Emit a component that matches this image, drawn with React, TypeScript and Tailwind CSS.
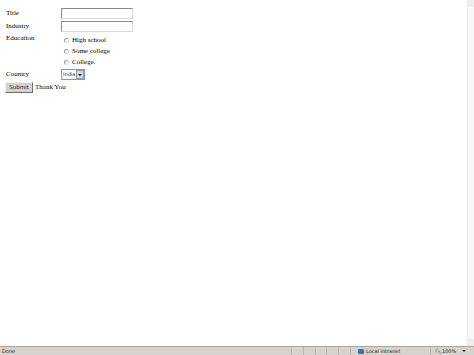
import React from "react";

const serif = { fontFamily: '"Liberation Serif", "Times New Roman", serif' };
const sans = { fontFamily: '"DejaVu Sans", "Liberation Sans", sans-serif' };

function Radio({ label }: { label: string }) {
  return (
    <div className="flex items-center h-[11px]">
      <span className="ml-[3px] w-[5px] h-[5px] rounded-full border border-[#9a9a9a] border-r-[#dcdcdc] border-b-[#dcdcdc] bg-white" />
      <span className="ml-[3px] text-[7px] leading-[7px] text-black" style={serif}>{label}</span>
    </div>
  );
}

export default function App() {
  return (
    <div className="w-[474px] h-[355px] flex flex-col bg-white overflow-hidden">
      <div className="flex flex-1 min-h-0">
        <div className="flex-1 pl-[6px] pt-[8px]">
          <div className="flex items-center h-[11px]">
            <span className="w-[55px] text-[7px] leading-[7px] text-black" style={serif}>Title</span>
            <span className="w-[72px] h-[11px] border border-[#8a8a8a] border-r-[#d8d8d8] border-b-[#d8d8d8] bg-white" />
          </div>
          <div className="flex items-center h-[11px] mt-[2px]">
            <span className="w-[55px] text-[7px] leading-[7px] text-black" style={serif}>Industry</span>
            <span className="w-[72px] h-[11px] border border-[#8a8a8a] border-r-[#d8d8d8] border-b-[#d8d8d8] bg-white" />
          </div>
          <div className="flex mt-[3px]">
            <span className="w-[55px] text-[7px] leading-[7px] text-black" style={serif}>Education</span>
            <div className="flex flex-col">
              <Radio label="High school" />
              <Radio label="Some college" />
              <Radio label="College." />
            </div>
          </div>
          <div className="flex items-center h-[11px] mt-[1px]">
            <span className="w-[55px] text-[7px] leading-[7px] text-black" style={serif}>Country</span>
            <span className="flex items-center h-[11px] border border-[#7f9db9] bg-white">
              <span className="px-[1px] text-[5px] leading-[5px] text-[#222]" style={sans}>India</span>
              <span className="w-[8px] h-[9px] bg-[#d8d8d8] border border-[#9a9a9a] flex items-center justify-center">
                <span className="w-0 h-0 border-l-[2px] border-r-[2px] border-t-[2px] border-l-transparent border-r-transparent border-t-black" />
              </span>
            </span>
          </div>
          <div className="flex items-center mt-[2px] -ml-[1px]">
            <span className="w-[28px] h-[11px] flex items-center justify-center bg-[#d6d3ce] border border-t-[#f0f0f0] border-l-[#f0f0f0] border-r-[#707070] border-b-[#707070] text-[5.5px] leading-[5px] text-[#222]" style={sans}>Submit</span>
            <span className="ml-[2px] text-[7px] leading-[7px] text-black" style={serif}>Thank You</span>
          </div>
        </div>
        <div className="w-[7px] bg-[#f8f8f8] border-l border-[#efefef] flex flex-col">
          <div className="h-[7px] bg-[#eeeeee]" />
          <div className="flex-1" />
          <div className="h-[7px] bg-[#eeeeee]" />
        </div>
      </div>
      <div className="h-[9px] bg-[#d6d3ce] border-t border-[#a8a6a0] flex items-center text-[5px] leading-[5px] text-[#222]" style={sans}>
        <span className="ml-[2px] w-[289px]">Done</span>
        <span className="h-[8px] w-[12px] border-l border-[#b8b5ae]" />
        <span className="h-[8px] w-[12px] border-l border-[#b8b5ae]" />
        <span className="h-[8px] w-[11px] border-l border-[#b8b5ae]" />
        <span className="h-[8px] w-[12px] border-l border-[#b8b5ae]" />
        <span className="h-[8px] w-[12px] border-l border-[#b8b5ae]" />
        <span className="h-[8px] w-[80px] border-l border-[#b8b5ae] flex items-center">
          <span className="ml-[7px] w-[6px] h-[5px] bg-[#3c6fb4] rounded-[1px]" />
          <span className="ml-[2px]">Local intranet</span>
        </span>
        <span className="h-[8px] flex-1 border-l border-[#b8b5ae] flex items-center">
          <span className="ml-[4px] text-[5px]">🔍︎</span>
          <span className="ml-[1px]">100%</span>
          <span className="ml-[6px] w-0 h-0 border-l-[2px] border-r-[2px] border-t-[2px] border-l-transparent border-r-transparent border-t-[#333]" />
        </span>
      </div>
    </div>
  );
}
